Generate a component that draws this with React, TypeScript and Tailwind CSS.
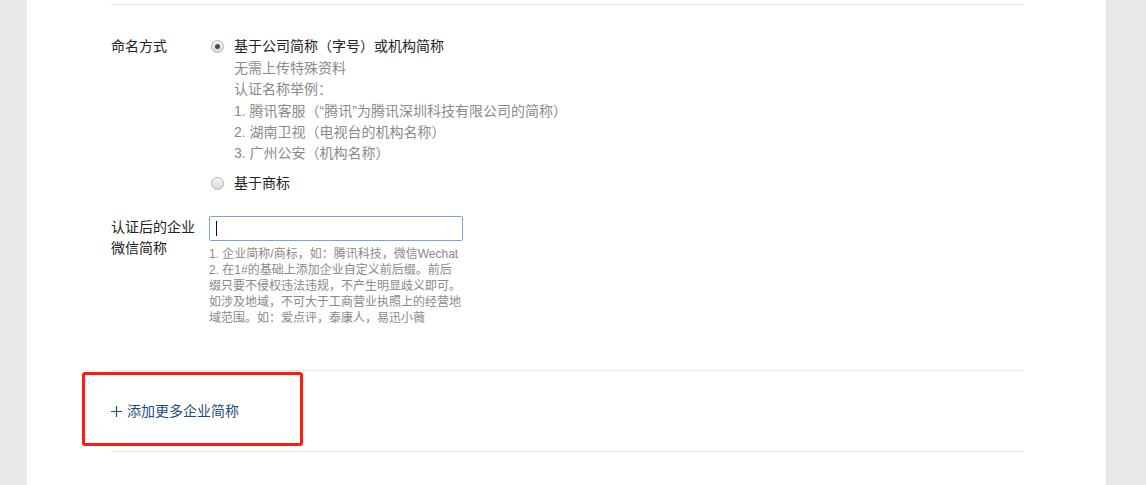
import React from "react";

const FONT = { fontFamily: '"Liberation Sans", "Noto Sans CJK SC", sans-serif' };

const examples = [
  "无需上传特殊资料",
  "认证名称举例：",
  "1. 腾讯客服（“腾讯”为腾讯深圳科技有限公司的简称）",
  "2. 湖南卫视（电视台的机构名称）",
  "3. 广州公安（机构名称）",
];

const nameTips = [
  "1. 企业简称/商标，如：腾讯科技，微信Wechat",
  "2. 在1#的基础上添加企业自定义前后缀。前后缀只要不侵权违法违规，不产生明显歧义即可。如涉及地域，不可大于工商营业执照上的经营地域范围。如：爱点评，泰康人，易迅小薇",
];

function Radio({ checked }: { checked?: boolean }) {
  return (
    <span className="flex h-[13px] w-[13px] shrink-0 items-center justify-center rounded-full border border-[#b3b3b3] bg-gradient-to-b from-[#f7f7f7] to-[#d9d9d9]">
      {checked && <span className="h-[5px] w-[5px] rounded-full bg-[#4a4a4a]" />}
    </span>
  );
}

function PlusIcon() {
  return (
    <svg width="11" height="11" viewBox="0 0 11 11" className="shrink-0">
      <path d="M5.5 0v11M0 5.5h11" stroke="currentColor" strokeWidth="1.2" />
    </svg>
  );
}

export default function App() {
  return (
    <div className="flex min-h-[485px] w-full bg-[#e8e9eb]" style={FONT}>
      <div className="ml-[27px] w-[1080px] bg-white pl-[84px] border-r border-[#dcdddf]">
        <div className="w-[912px]">
          <div className="mt-[4px] border-t border-[#e4e5e7]" />

          {/* naming method */}
          <div className="mt-[30px] flex text-[14px] text-[#222]">
            <div className="w-[98px] leading-[22px]">命名方式</div>
            <div className="flex flex-col">
              <label className="flex items-center gap-[10px] pl-[2px] leading-[22px]">
                <Radio checked />
                <span>基于公司简称（字号）或机构简称</span>
              </label>
              <div className="mt-[1px] pl-[25px] text-[#8a8a8a] leading-[21.25px]">
                {examples.map((line) => (
                  <div key={line}>{line}</div>
                ))}
              </div>
              <label className="mt-[8px] flex items-center gap-[10px] pl-[2px] leading-[22px]">
                <Radio />
                <span>基于商标</span>
              </label>
            </div>
          </div>

          {/* short name */}
          <div className="mt-[22px] flex text-[14px] text-[#222]">
            <div className="mt-[1px] w-[98px] pr-[8px] leading-[21px]">认证后的企业微信简称</div>
            <div className="w-[254px]">
              <div className="flex h-[25px] items-center rounded-[2px] border border-[#7ba4d6] px-[6px]">
                <span className="h-[15px] w-[1px] bg-[#111]" />
              </div>
              <div className="mt-[5px] text-[12px] leading-[16px] text-[#8a8a8a]">
                {nameTips.map((line) => (
                  <div key={line}>{line}</div>
                ))}
              </div>
            </div>
          </div>

          {/* add more */}
          <div className="relative mt-[44px] flex h-[82px] items-center border-y border-[#e4e5e7] text-[14px] text-[#1d4d7a]">
            <span className="flex items-center gap-[5px]">
              <PlusIcon />
              <span>添加更多企业简称</span>
            </span>
            <div className="absolute left-[-29px] top-[1px] h-[74px] w-[221px] rounded-[3px] border-[3px] border-[#ff1b10]" />
          </div>
        </div>
      </div>
    </div>
  );
}
